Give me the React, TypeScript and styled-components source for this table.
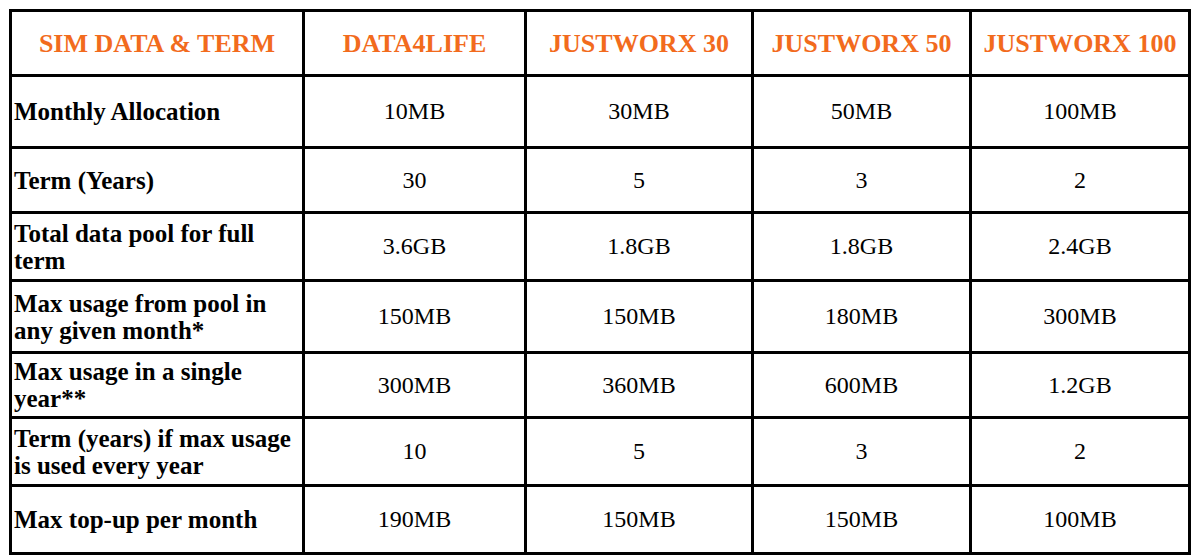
import React from 'react';
import styled, { createGlobalStyle } from 'styled-components';

const GlobalStyle = createGlobalStyle`
  html, body {
    margin: 0;
    padding: 0;
    background: #fff;
  }
  body {
    font-family: "Liberation Serif", "Times New Roman", serif;
    color: #000;
  }
`;

const Page = styled.div`
  padding: 9px 0 0 9px;
  width: 1200px;
  height: 560px;
  box-sizing: border-box;
`;

const Table = styled.table`
  border-collapse: collapse;
  table-layout: fixed;
  width: 1182px;
  font-size: 24px;
  line-height: 27px;
`;

const HeadCell = styled.th`
  border: 3px solid #000;
  color: #f26b1d;
  font-size: 26px;
  font-weight: bold;
  text-align: center;
  vertical-align: middle;
  padding: 0 1px;
`;

const LabelCell = styled.td`
  border: 3px solid #000;
  font-size: 25px;
  font-weight: bold;
  text-align: left;
  vertical-align: middle;
  padding: 0 0 0 2px;
`;

const ValueCell = styled.td`
  border: 3px solid #000;
  text-align: center;
  vertical-align: middle;
  padding: 0 2px;
`;

const Row = styled.tr<{ $h: number }>`
  height: ${(p) => p.$h}px;
`;

const plans = ['DATA4LIFE', 'JUSTWORX 30', 'JUSTWORX 50', 'JUSTWORX 100'];
const colWidths = [293, 222, 227, 218, 219];

const rows = [
  { label: 'Monthly Allocation', values: ['10MB', '30MB', '50MB', '100MB'], h: 72 },
  { label: 'Term (Years)', values: ['30', '5', '3', '2'], h: 65 },
  { label: 'Total data pool for full term', values: ['3.6GB', '1.8GB', '1.8GB', '2.4GB'], h: 68 },
  { label: 'Max usage from pool in any given month*', values: ['150MB', '150MB', '180MB', '300MB'], h: 72 },
  { label: 'Max usage in a single year**', values: ['300MB', '360MB', '600MB', '1.2GB'], h: 65 },
  { label: 'Term (years) if max usage is used every year', values: ['10', '5', '3', '2'], h: 68 },
  { label: 'Max top-up per month', values: ['190MB', '150MB', '150MB', '100MB'], h: 68 },
];

export default function App() {
  return (
    <>
      <GlobalStyle />
      <Page>
        <Table>
          <colgroup>
            {colWidths.map((w, i) => (
              <col key={i} style={{ width: w }} />
            ))}
          </colgroup>
          <thead>
            <Row $h={65}>
              <HeadCell>SIM DATA &amp; TERM</HeadCell>
              {plans.map((p) => (
                <HeadCell key={p}>{p}</HeadCell>
              ))}
            </Row>
          </thead>
          <tbody>
            {rows.map((r) => (
              <Row key={r.label} $h={r.h}>
                <LabelCell>{r.label}</LabelCell>
                {r.values.map((v, i) => (
                  <ValueCell key={i}>{v}</ValueCell>
                ))}
              </Row>
            ))}
          </tbody>
        </Table>
      </Page>
    </>
  );
}
